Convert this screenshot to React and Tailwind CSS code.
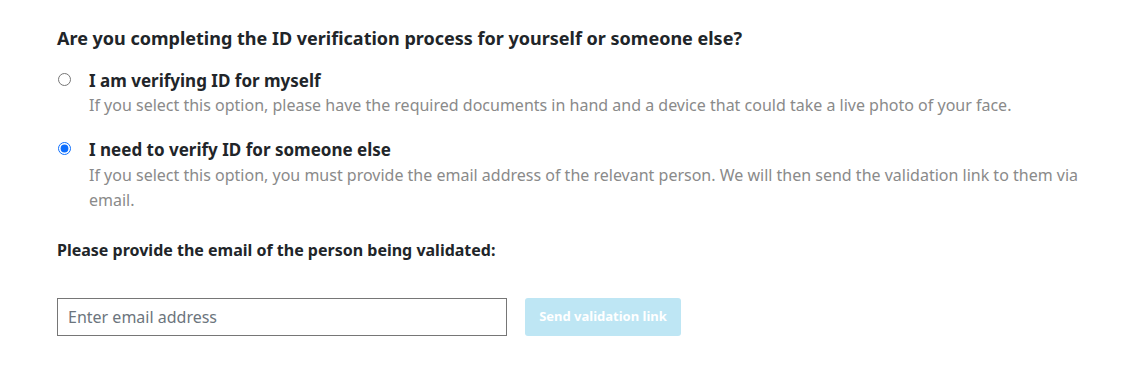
import { useState } from "react";

export default function App() {
  const [choice, setChoice] = useState("other");
  const [email, setEmail] = useState("");

  return (
    <div className="min-h-screen bg-white text-[#212529] font-['Noto_Sans',sans-serif]">
      <div className="pl-[57px] pr-[30px] pt-[25px]">
        <h2 className="text-[18px] font-bold leading-[26px] text-[#212529]">
          Are you completing the ID verification process for yourself or someone else?
        </h2>

        <div className="mt-[18px] flex flex-col gap-[20px]">
          <label className="flex items-start gap-[18px] cursor-pointer">
            <input
              type="radio"
              name="who"
              checked={choice === "self"}
              onChange={() => setChoice("self")}
              className="mt-[4px] ml-[1px] h-[13px] w-[13px] shrink-0 accent-[#0d6efd]"
            />
            <div>
              <div className="text-[17px] font-bold leading-[24px]">I am verifying ID for myself</div>
              <div className="text-[16px] leading-[25px] text-[#8a8a8a]">
                If you select this option, please have the required documents in hand and a device that could take a live photo of your face.
              </div>
            </div>
          </label>

          <label className="flex items-start gap-[18px] cursor-pointer">
            <input
              type="radio"
              name="who"
              checked={choice === "other"}
              onChange={() => setChoice("other")}
              className="mt-[4px] ml-[1px] h-[13px] w-[13px] shrink-0 accent-[#0d6efd]"
            />
            <div>
              <div className="text-[17px] font-bold leading-[24px]">I need to verify ID for someone else</div>
              <div className="pt-[1px] text-[16px] leading-[25px] text-[#8a8a8a]">
                If you select this option, you must provide the email address of the relevant person. We will then send the validation link to them via email.
              </div>
            </div>
          </label>
        </div>

        <div className="mt-[25px] text-[16px] font-bold leading-[24px]">
          Please provide the email of the person being validated:
        </div>

        <div className="mt-[36px] flex items-center gap-[18px]">
          <input
            type="email"
            value={email}
            onChange={(e) => setEmail(e.target.value)}
            placeholder="Enter email address"
            className="h-[38px] w-[450px] border border-[#767676] px-[10px] text-[16px] text-[#212529] placeholder:text-[#6c757d] outline-none"
          />
          <button
            disabled={!email}
            className="h-[38px] w-[156px] rounded-[3px] bg-[#bee6f4] text-[13px] font-bold text-white"
          >
            Send validation link
          </button>
        </div>
      </div>
    </div>
  );
}
